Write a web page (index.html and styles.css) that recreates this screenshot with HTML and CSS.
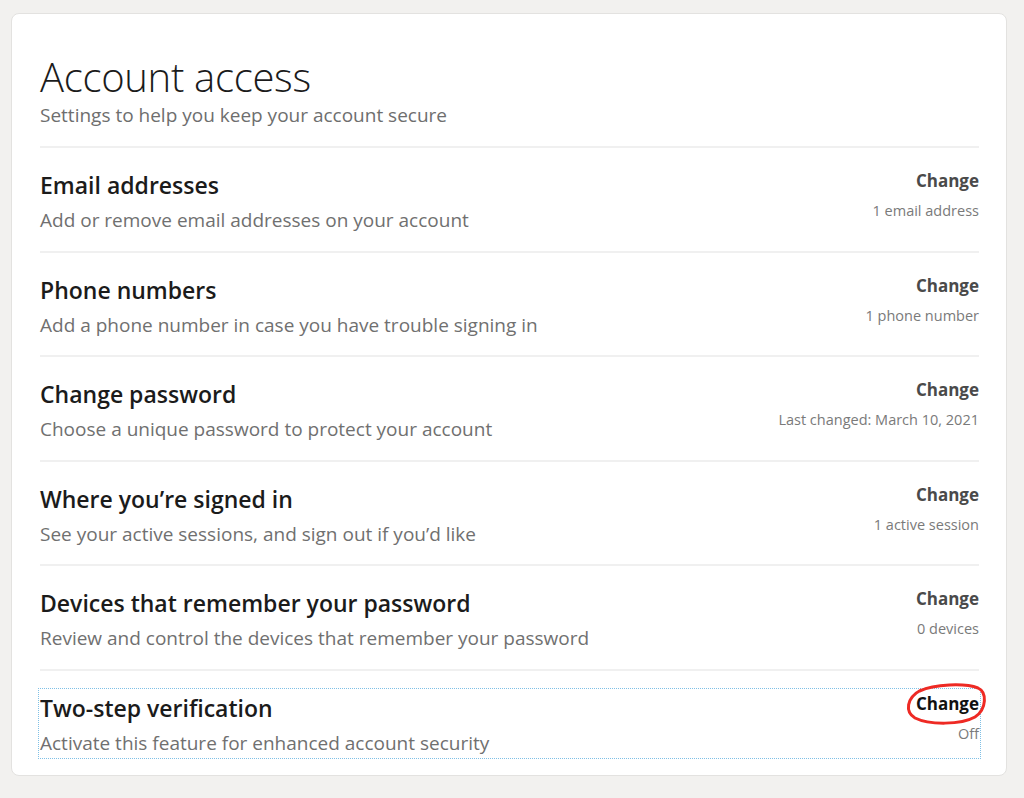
FILE: index.html
```html
<!DOCTYPE html>
<html lang="en">
<head>
    <meta charset="UTF-8">
    <meta name="viewport" content="width=device-width, initial-scale=1.0">
    <title>Account access</title>
    <link rel="stylesheet" href="styles.css">
</head>
<body>
    <main class="panel">
        <header class="panel-header">
            <h1>Account access</h1>
            <p class="subtitle">Settings to help you keep your account secure</p>
        </header>

        <ul class="settings">
            <li class="setting">
                <div class="setting-inner">
                    <div class="setting-text">
                        <h2>Email addresses</h2>
                        <p>Add or remove email addresses on your account</p>
                    </div>
                    <div class="setting-action">
                        <a class="change" href="#">Change</a>
                        <span class="status">1 email address</span>
                    </div>
                </div>
            </li>
            <li class="setting">
                <div class="setting-inner">
                    <div class="setting-text">
                        <h2>Phone numbers</h2>
                        <p>Add a phone number in case you have trouble signing in</p>
                    </div>
                    <div class="setting-action">
                        <a class="change" href="#">Change</a>
                        <span class="status">1 phone number</span>
                    </div>
                </div>
            </li>
            <li class="setting">
                <div class="setting-inner">
                    <div class="setting-text">
                        <h2>Change password</h2>
                        <p>Choose a unique password to protect your account</p>
                    </div>
                    <div class="setting-action">
                        <a class="change" href="#">Change</a>
                        <span class="status">Last changed: March 10, 2021</span>
                    </div>
                </div>
            </li>
            <li class="setting">
                <div class="setting-inner">
                    <div class="setting-text">
                        <h2>Where you’re signed in</h2>
                        <p>See your active sessions, and sign out if you’d like</p>
                    </div>
                    <div class="setting-action">
                        <a class="change" href="#">Change</a>
                        <span class="status">1 active session</span>
                    </div>
                </div>
            </li>
            <li class="setting">
                <div class="setting-inner">
                    <div class="setting-text">
                        <h2>Devices that remember your password</h2>
                        <p>Review and control the devices that remember your password</p>
                    </div>
                    <div class="setting-action">
                        <a class="change" href="#">Change</a>
                        <span class="status">0 devices</span>
                    </div>
                </div>
            </li>
            <li class="setting">
                <div class="setting-inner focused">
                    <div class="setting-text">
                        <h2>Two-step verification</h2>
                        <p>Activate this feature for enhanced account security</p>
                    </div>
                    <div class="setting-action">
                        <a class="change highlight" href="#">Change
                            <svg class="circle-mark" viewBox="0 0 84 46" aria-hidden="true">
                                <path d="M16 10 C30 3 61 2 74 7 C83 11 83 28 71 36 C57 44 25 44 11 37 C1 31 2 17 17 9" fill="none" stroke="#ee2a24" stroke-width="3" stroke-linecap="round"/>
                            </svg>
                        </a>
                        <span class="status">Off</span>
                    </div>
                </div>
            </li>
        </ul>
    </main>
</body>
</html>
```

FILE: styles.css
```css
* {
    margin: 0;
    padding: 0;
    box-sizing: border-box;
}

body {
    background: #f2f1ef;
    font-family: 'Open Sans', 'Noto Sans', sans-serif;
    padding: 13px 17px 22px 11px;
}

.panel {
    background: #fff;
    border: 1px solid #e3e2e0;
    border-radius: 8px;
    padding: 40px 27px 18px 28px;
}

.panel-header {
    padding-bottom: 18px;
    border-bottom: 2px solid #f0f0f0;
}

h1 {
    font-size: 40px;
    font-weight: 300;
    color: #1b1b1b;
    line-height: 46px;
    letter-spacing: -0.3px;
}

.subtitle {
    font-size: 19px;
    color: #6e6e6e;
    line-height: 26px;
    margin-top: 2px;
}

.settings {
    list-style: none;
}

.setting {
    padding: 19px 0 16.6px;
    border-bottom: 2px solid #f0f0f0;
}

.setting:last-child {
    border-bottom: none;
    padding-bottom: 0;
}

.setting-inner {
    display: flex;
    justify-content: space-between;
    align-items: flex-start;
    padding: 2px 0 0;
}

.setting-inner.focused {
    outline: 1px dotted #7fc0e6;
    outline-offset: 1px;
}

.setting-text h2 {
    font-size: 23px;
    font-weight: 600;
    color: #1b1b1b;
    line-height: 32px;
}

.setting-text p {
    font-size: 19px;
    color: #707070;
    line-height: 28px;
    margin-top: 5px;
}

.setting-action {
    display: flex;
    flex-direction: column;
    align-items: flex-end;
    gap: 8px;
}

.change {
    position: relative;
    font-size: 17px;
    font-weight: 700;
    color: #4a4a4a;
    text-decoration: none;
    line-height: 24px;
}

.change.highlight {
    color: #111;
}

.circle-mark {
    position: absolute;
    left: -12px;
    top: -11px;
    width: 84px;
    height: 46px;
}

.status {
    font-size: 14.5px;
    color: #7a7a7a;
    line-height: 20px;
}
```
